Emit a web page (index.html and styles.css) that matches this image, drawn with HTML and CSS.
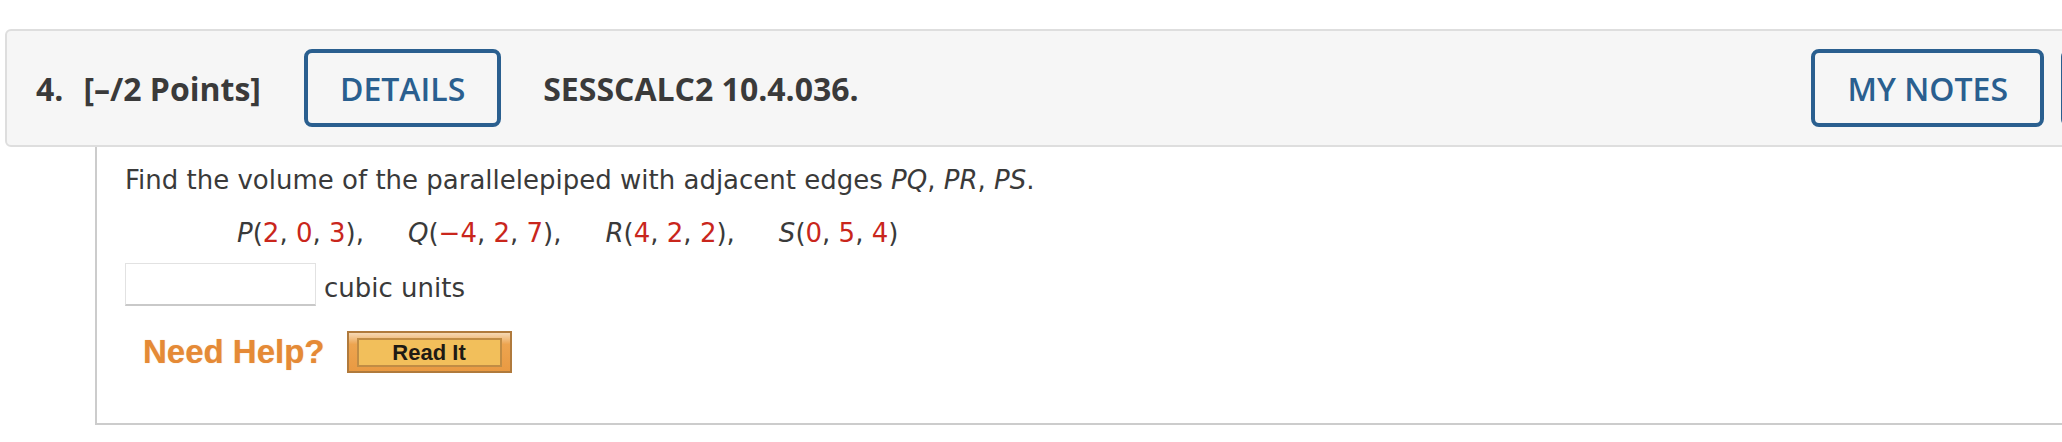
FILE: index.html
```html
<!DOCTYPE html>
<html>
<head>
<meta charset="utf-8">
<link rel="stylesheet" href="styles.css">
</head>
<body>
<div class="page">
  <div class="question">
    <div class="qhead">
      <span class="qnum">4.</span>
      <span class="qpts">[–/2 Points]</span>
      <button class="hbtn">DETAILS</button>
      <span class="qcode">SESSCALC2 10.4.036.</span>
      <div class="hright">
        <button class="hbtn">MY NOTES</button>
        <span class="hbtn edge" aria-hidden="true"></span>
      </div>
    </div>
    <div class="qbody">
      <p class="prompt">Find the volume of the parallelepiped with adjacent edges <i>PQ</i>, <i>PR</i>, <i>PS</i>.</p>
      <p class="points"><span class="pt"><i>P</i>(<span class="r">2</span>, <span class="r">0</span>, <span class="r">3</span>),</span><span class="pt"><i>Q</i>(<span class="r">−4</span>, <span class="r">2</span>, <span class="r">7</span>),</span><span class="pt"><i>R</i>(<span class="r">4</span>, <span class="r">2</span>, <span class="r">2</span>),</span><span class="pt"><i>S</i>(<span class="r">0</span>, <span class="r">5</span>, <span class="r">4</span>)</span></p>
      <div class="answer"><input class="ans" type="text"><span class="unit">cubic units</span></div>
      <div class="help"><span class="needhelp">Need Help?</span><button class="readit"><span class="readit-in">Read It</span></button></div>
    </div>
  </div>
</div>
</body>
</html>
```
FILE: styles.css
```css
html, body {
  margin: 0;
  padding: 0;
  background: #fff;
  overflow: hidden;
}
.page {
  padding: 29px 0 0 5px;
}
.question {
  width: 2386px;
}
.qhead {
  box-sizing: border-box;
  height: 118px;
  display: flex;
  align-items: center;
  padding: 0 28px 0 29px;
  background: #f6f6f6;
  border: 2px solid #dedede;
  border-radius: 6px;
  font-family: "Open Sans", sans-serif;
  font-weight: 700;
  font-size: 32px;
  color: #3a3a3a;
}
.qnum {
  margin-right: 20px;
}
.qpts {
  margin-right: 43px;
}
.hbtn {
  box-sizing: border-box;
  height: 78px;
  padding: 0 32px;
  background: transparent;
  border: 4px solid #2a5f8f;
  border-radius: 8px;
  font-family: "Open Sans", sans-serif;
  font-weight: 600;
  font-size: 32px;
  color: #2a5f8f;
  cursor: pointer;
}
.hbtn.edge {
  display: block;
  width: 300px;
}
.qcode {
  margin-left: 42px;
}
.hright {
  margin-left: auto;
  display: flex;
  gap: 17px;
}
.qbody {
  margin-left: 90px;
  border-left: 2px solid #cccccc;
  border-bottom: 2px solid #cccccc;
  padding: 16px 0 50px 28px;
  font-family: "DejaVu Sans", Verdana, sans-serif;
  font-size: 26px;
  line-height: 34px;
  color: #3a3a3a;
}
.prompt {
  margin: 0;
}
.points {
  margin: 19px 0 0 0;
  padding-left: 112px;
}
.pt {
  margin-right: 44px;
}
.r {
  color: #c9261c;
}
.answer {
  margin-top: 13px;
  display: flex;
  align-items: flex-start;
}
.ans {
  box-sizing: border-box;
  width: 191px;
  height: 43px;
  margin: 0;
  border: 1px solid #e2e2e2;
  border-bottom: 2px solid #c9c9c9;
  background: #fff;
  outline: none;
}
.unit {
  margin: 8px 0 0 8px;
}
.help {
  margin-top: 25px;
  display: flex;
  align-items: center;
  padding-left: 18px;
}
.needhelp {
  font-family: "Liberation Sans", Arial, sans-serif;
  font-weight: 700;
  font-size: 33px;
  line-height: 40px;
  color: #e58a36;
  text-shadow: 0 0 1px rgba(229, 138, 54, 0.6);
  margin-right: 22px;
}
.readit {
  box-sizing: border-box;
  width: 165px;
  height: 42px;
  padding: 5px 8px 4px 8px;
  margin: 0;
  border: 2px solid #b07a3c;
  background: linear-gradient(#f6d9b5 0, #eda44f 30%, #e99a42 100%);
  display: flex;
  cursor: pointer;
}
.readit-in {
  flex: 1;
  display: flex;
  align-items: center;
  justify-content: center;
  border: 2px solid #c08c44;
  background: #f2bf5b;
  font-family: "Liberation Sans", Arial, sans-serif;
  font-weight: 700;
  font-size: 22px;
  color: #1e1a14;
}
```
